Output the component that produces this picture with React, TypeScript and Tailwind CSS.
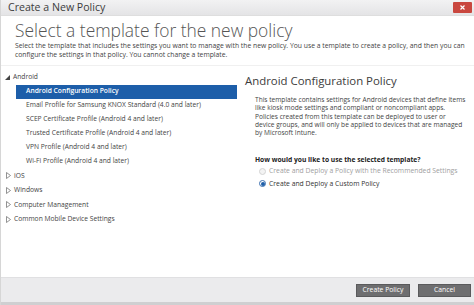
import React from "react";

const Expanded = () => (
  <svg width="5" height="5" viewBox="0 0 5 5" className="shrink-0">
    <polygon points="5,0 5,5 0,5" fill="#444" />
  </svg>
);
const Collapsed = () => (
  <svg width="5" height="7" viewBox="0 0 5 7" className="shrink-0">
    <polygon points="0.5,0.5 4.5,3.5 0.5,6.5" fill="none" stroke="#777" strokeWidth="0.8" />
  </svg>
);

const Radio = ({ checked, disabled }: { checked?: boolean; disabled?: boolean }) => (
  <span
    className={
      "w-[7px] h-[7px] rounded-full border flex items-center justify-center shrink-0 " +
      (checked ? "border-[#3a6fb0] bg-white" : disabled ? "border-[#d4d4d4] bg-[#f3f3f3]" : "border-[#999] bg-white")
    }
  >
    {checked && <span className="w-[4px] h-[4px] rounded-full bg-[#1f5fa8]" />}
  </span>
);

export default function App() {
  const children = [
    "Email Profile for Samsung KNOX Standard (4.0 and later)",
    "SCEP Certificate Profile (Android 4 and later)",
    "Trusted Certificate Profile (Android 4 and later)",
    "VPN Profile (Android 4 and later)",
    "Wi-Fi Profile (Android 4 and later)",
  ];
  const others = ["iOS", "Windows", "Computer Management", "Common Mobile Device Settings"];
  return (
    <div
      className="w-[474px] h-[305px] flex flex-col bg-white overflow-hidden text-[#444] border-l border-[#d6d6d6]"
      style={{ fontFamily: '"Open Sans", "Noto Sans", sans-serif' }}
    >
      <div className="h-[16px] flex items-center pl-[7px] pr-[2px] bg-gradient-to-b from-[#f2f2f3] to-[#e4e4e6] border-b border-[#dedede] shrink-0">
        <span className="text-[10.6px] text-[#3c3c3c] leading-none">Create a New Policy</span>
        <span className="ml-auto w-[19px] h-[11px] bg-[#c9473f] rounded-[1px] flex items-center justify-center">
          <svg width="5" height="5" viewBox="0 0 5 5">
            <path d="M0.5 0.5 L4.5 4.5 M4.5 0.5 L0.5 4.5" stroke="white" strokeWidth="1.2" />
          </svg>
        </span>
      </div>
      <div className="px-[14px] pt-[3px]">
        <div className="h-[22px] leading-[22px] text-[17.4px] font-light text-[#555] whitespace-nowrap">
          Select a template for the new policy
        </div>
        <div className="text-[6.8px] leading-[9px] text-[#444] whitespace-nowrap">
          <div>
            Select the template that includes the settings you want to manage with the new policy. You use a template to create a policy, and then you can
          </div>
          <div>configure the settings in that policy. You cannot change a template.</div>
        </div>
      </div>
      <div className="mt-[6px] border-t border-[#f0f0f0]" />
      <div className="flex flex-1 pt-[4px]">
        <div className="w-[236px] text-[6.7px] text-[#444] whitespace-nowrap">
          <div className="h-[14.5px] flex items-center gap-[3px] pl-[4px]">
            <Expanded />
            <span>Android</span>
          </div>
          <div className="h-[14px] flex items-center pl-[10px] bg-[#1d5ea9] text-white ml-[15px]">
            <span className="font-semibold">Android Configuration Policy</span>
          </div>
          {children.map((c) => (
            <div key={c} className="h-[14px] flex items-center pl-[25px]">
              {c}
            </div>
          ))}
          {others.map((c) => (
            <div key={c} className="h-[14.5px] flex items-center gap-[3px] pl-[5px]">
              <Collapsed />
              <span>{c}</span>
            </div>
          ))}
        </div>
        <div className="flex-1 pt-[4px] whitespace-nowrap">
          <div className="pl-[8px] h-[14px] leading-[14px] text-[11.4px] text-[#3c3c3c]">Android Configuration Policy</div>
          <div className="pl-[18px] mt-[8px] text-[6.6px] leading-[8.3px] text-[#444]">
            <div>This template contains settings for Android devices that define items</div>
            <div>like kiosk mode settings and compliant or noncompliant apps.</div>
            <div>Policies created from this template can be deployed to user or</div>
            <div>device groups, and will only be applied to devices that are managed</div>
            <div>by Microsoft Intune.</div>
          </div>
          <div className="pl-[18px] mt-[17.5px] h-[10px] leading-[10px] text-[6.7px] font-bold text-[#222]">
            How would you like to use the selected template?
          </div>
          <div className="pl-[22px] text-[6.8px]">
            <div className="h-[12.5px] flex items-center gap-[3px] text-[#a0a0a0]">
              <Radio disabled />
              <span>Create and Deploy a Policy with the Recommended Settings</span>
            </div>
            <div className="h-[12.5px] flex items-center gap-[3px] text-[#333]">
              <Radio checked />
              <span>Create and Deploy a Custom Policy</span>
            </div>
          </div>
        </div>
      </div>
      <div className="h-[25px] bg-[#ebebed] border-t border-[#e0e0e2] flex items-start justify-end pt-[6px] pr-[3px] gap-[8px] shrink-0">
        <button className="w-[54px] h-[13px] bg-[#6e6e70] border border-[#5a5a5c] text-white text-[6.8px] leading-none">
          Create Policy
        </button>
        <button className="w-[53px] h-[13px] bg-[#6e6e70] border border-[#5a5a5c] text-white text-[6.8px] leading-none">
          Cancel
        </button>
      </div>
      <div className="h-[3px] bg-[#cfcfd1] shrink-0" />
    </div>
  );
}
